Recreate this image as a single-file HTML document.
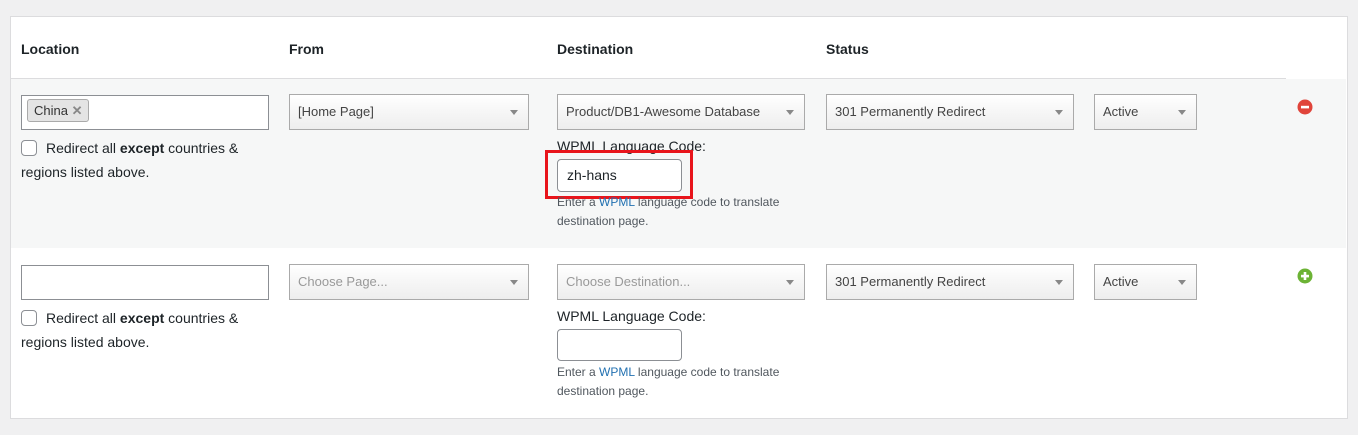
<!DOCTYPE html>
<html><head><style>
body{margin:0;width:1358px;height:435px;background:#f0f0f1;font-family:"Liberation Sans",sans-serif;color:#1d2327;position:relative;overflow:hidden}
.a{position:absolute}
.panel{left:10px;top:16px;width:1336px;height:401px;background:#fff;border:1px solid #dcdcde}
.th{font-weight:bold;font-size:14px;top:41px}
.inp{background:#fff;border:1px solid #8c8f94;box-sizing:border-box}
.sel{border:1px solid #aaa;box-sizing:border-box;background:linear-gradient(#fff 0%,#f6f6f6 50%,#eee 100%);font-size:13px;line-height:34px;padding-left:8px;color:#444;height:36px}
.sel:after{content:"";position:absolute;right:10px;top:15px;border:4px solid transparent;border-top:5px solid #888;border-bottom:0}
.cb{width:16px;height:16px;border:1px solid #8c8f94;border-radius:4px;background:#fff;box-sizing:border-box}
.t14{font-size:14px}
.help{font-size:12px;color:#50575e;line-height:19px}
.help span{color:#2271b1}
</style></head><body>
<div class="a panel"></div>
<div class="a" style="left:11px;top:78px;width:1275px;height:1px;background:#dcdcde"></div>
<div class="a" style="left:11px;top:79px;width:1335px;height:169px;background:#f6f7f7"></div>
<div class="a th" style="left:21px">Location</div>
<div class="a th" style="left:289px">From</div>
<div class="a th" style="left:557px">Destination</div>
<div class="a th" style="left:826px">Status</div>

<!-- row 1 -->
<div class="a inp" style="left:21px;top:95px;width:248px;height:35px"></div>
<div class="a" style="left:27px;top:99px;height:21px;border:1px solid #aaa;border-radius:3px;background:#e4e4e4;font-size:13px;line-height:21px;padding:0 6px;color:#333">China <span style="color:#888;font-weight:bold">✕</span></div>
<div class="a cb" style="left:21px;top:140px"></div>
<div class="a t14" style="left:46px;top:140px">Redirect all <b>except</b> countries &amp;</div>
<div class="a t14" style="left:21px;top:164px">regions listed above.</div>
<div class="a sel" style="left:289px;top:94px;width:240px">[Home Page]</div>
<div class="a sel" style="left:557px;top:94px;width:248px">Product/DB1-Awesome Database</div>
<div class="a sel" style="left:826px;top:94px;width:248px">301 Permanently Redirect</div>
<div class="a sel" style="left:1094px;top:94px;width:103px">Active</div>
<div class="a t14" style="left:557px;top:138px">WPML Language Code:</div>
<div class="a" style="left:545px;top:150px;width:148px;height:49px;border:3px solid #e8141b;box-sizing:border-box"></div>
<div class="a inp" style="left:557px;top:159px;width:125px;height:33px;border-radius:4px;font-size:14px;line-height:31px;padding-left:9px">zh-hans</div>
<div class="a help" style="left:557px;top:193px">Enter a <span>WPML</span> language code to translate<br>destination page.</div>
<svg class="a" style="left:1297px;top:99px" width="16" height="16"><circle cx="8" cy="8" r="7.5" fill="#e0443a"/><rect x="4" y="6.8" width="8" height="2.6" fill="#fff"/></svg>

<!-- row 2 -->
<div class="a inp" style="left:21px;top:265px;width:248px;height:35px"></div>
<div class="a cb" style="left:21px;top:310px"></div>
<div class="a t14" style="left:46px;top:310px">Redirect all <b>except</b> countries &amp;</div>
<div class="a t14" style="left:21px;top:334px">regions listed above.</div>
<div class="a sel" style="left:289px;top:264px;width:240px;color:#999">Choose Page...</div>
<div class="a sel" style="left:557px;top:264px;width:248px;color:#999">Choose Destination...</div>
<div class="a sel" style="left:826px;top:264px;width:248px">301 Permanently Redirect</div>
<div class="a sel" style="left:1094px;top:264px;width:103px">Active</div>
<div class="a t14" style="left:557px;top:308px">WPML Language Code:</div>
<div class="a inp" style="left:557px;top:329px;width:125px;height:32px;border-radius:4px"></div>
<div class="a help" style="left:557px;top:363px">Enter a <span>WPML</span> language code to translate<br>destination page.</div>
<svg class="a" style="left:1297px;top:268px" width="16" height="16"><circle cx="8" cy="8" r="7.5" fill="#6cb335"/><rect x="4" y="6.8" width="8" height="2.6" fill="#fff"/><rect x="6.7" y="4" width="2.6" height="8" fill="#fff"/></svg>
</body></html>
